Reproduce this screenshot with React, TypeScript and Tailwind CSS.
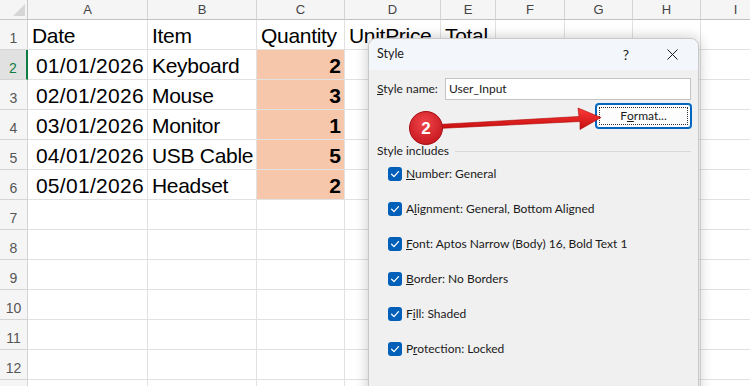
import React from 'react';

const COLS = ['A', 'B', 'C', 'D', 'E', 'F', 'G', 'H', 'I'];
const ROWS = [1, 2, 3, 4, 5, 6, 7, 8, 9, 10, 11, 12, 13];

const data: Record<number, string[]> = {
    1: ['Date', 'Item', 'Quantity', 'UnitPrice', 'Total'],
    2: ['01/01/2026', 'Keyboard', '2'],
    3: ['02/01/2026', 'Mouse', '3'],
    4: ['03/01/2026', 'Monitor', '1'],
    5: ['04/01/2026', 'USB Cable', '5'],
    6: ['05/01/2026', 'Headset', '2'],
};

const includes: [string, string, string][] = [
    ['', 'N', 'umber: General'],
    ['A', 'l', 'ignment: General, Bottom Aligned'],
    ['', 'F', 'ont: Aptos Narrow (Body) 16, Bold Text 1'],
    ['', 'B', 'order: No Borders'],
    ['F', 'i', 'll: Shaded'],
    ['P', 'r', 'otection: Locked'],
];

function Cell({row, col}: { row: number; col: number }) {
    const values = data[row];
    const value = values ? values[col] : undefined;
    const isQty = col === 2 && row >= 2 && row <= 6;
    const isDate = col === 0 && row >= 2 && row <= 6;

    let cls = 'border-r border-b border-[#e1e1e1] flex items-end leading-none whitespace-nowrap text-[21px] text-black pb-[3px] ';
    if (isQty) cls += 'bg-[#f7c7ac] justify-end pr-[3px] font-bold';
    else if (isDate) cls += 'justify-end pr-[3px] tracking-[0.3px]';
    else cls += 'pl-[4px] tracking-[-0.3px]';

    return <div className={cls}>{value}</div>;
}

function Checkbox() {
    return (
        <div className="w-[14px] h-[14px] rounded-[3px] bg-[#005fb8] flex items-center justify-center shrink-0">
            <svg width="14" height="14" viewBox="0 0 14 14">
                <polyline points="3.6,7.3 6,9.6 10.5,4.6" fill="none" stroke="white" strokeWidth="1.3"
                          strokeLinecap="round" strokeLinejoin="round"/>
            </svg>
        </div>
    );
}

export default function App() {
    return (
        <div className="relative w-[750px] h-[386px] overflow-hidden bg-white font-['Liberation_Sans',Arial,sans-serif]">

            {/* Sheet grid */}
            <div
                className="grid grid-cols-[28px_120px_109px_88px_96px_55px_69px_68px_68px_70px] grid-rows-[20px_repeat(13,30px)]">
                {/* corner */}
                <div className="bg-[#f5f5f5] border-r border-b border-[#c8c8c8] relative">
                    <div
                        className="absolute right-[2px] bottom-[3px] w-0 h-0 border-l-[12px] border-l-transparent border-b-[12px] border-b-[#d6d6d6]"></div>
                </div>
                {COLS.map((c) => (
                    <div key={c}
                         className="bg-[#f5f5f5] border-r border-b border-[#d4d4d4] border-b-[#c2c2c2] flex items-center justify-center text-[13px] text-[#444]">
                        {c}
                    </div>
                ))}

                {ROWS.map((r) => (
                    <React.Fragment key={r}>
                        <div
                            className={
                                r === 2
                                    ? 'bg-[#e1e1e1] border-r-2 border-r-[#107c41] border-b border-b-[#d4d4d4] flex items-end justify-center pb-[4px] text-[14px] leading-none text-[#107c41]'
                                    : 'bg-[#f5f5f5] border-r border-b border-[#d4d4d4] flex items-end justify-center pb-[4px] text-[14px] leading-none text-[#555]'
                            }>
                            {r}
                        </div>
                        {COLS.map((c, i) => (
                            <Cell key={c} row={r} col={i}/>
                        ))}
                    </React.Fragment>
                ))}
            </div>

            {/* Style dialog */}
            <div
                className="absolute left-[368px] top-[38px] w-[331px] h-[380px] bg-[#f0f0f0] rounded-t-[8px] border border-[#c9c9c9] shadow-[0_0_14px_rgba(0,0,0,0.22)] flex flex-col font-['Lato',sans-serif] text-[12px] text-[#1a1a1a]">
                <div className="h-[31px] bg-[#f3f6fa] rounded-t-[8px] flex items-center pl-[8px] pr-[20px] shrink-0">
                    <span className="text-[12.5px]">Style</span>
                    <span className="ml-auto text-[14px] mr-[38px]">?</span>
                    <svg width="11" height="11" viewBox="0 0 11 11">
                        <path d="M0.5 0.5 L10.5 10.5 M10.5 0.5 L0.5 10.5" stroke="#1a1a1a" strokeWidth="1"/>
                    </svg>
                </div>

                <div className="flex flex-col pl-[8px] pr-[7px] pt-[8px]">
                    <div className="flex items-center h-[22px]">
                        <span className="w-[68px]"><span className="underline">S</span>tyle name:</span>
                        <div
                            className="flex-1 h-[22px] bg-white border border-[#c4c4c4] flex items-center pl-[3px]">User_Input
                        </div>
                    </div>

                    <div className="flex justify-end mt-[4px]">
                        <div
                            className="w-[95px] h-[24px] rounded-[3px] border border-[#0067c0] bg-[#fdfdfd] p-[2px] shadow-[0_0_0_1px_#0067c0]">
                            <div
                                className="w-full h-full border border-dotted border-[#333] flex items-center justify-center">
                                F<span className="underline">o</span>rmat...
                            </div>
                        </div>
                    </div>

                    <div className="flex items-center mt-[14px]">
                        <span>Style includes</span>
                        <div className="flex-1 h-px bg-[#d9d9d9] ml-[6px]"></div>
                    </div>

                    <div className="flex flex-col gap-[21px] pl-[11px] mt-[7px]">
                        {includes.map(([a, u, b]) => (
                            <div key={u + b} className="flex items-center gap-[4px] h-[14px]">
                                <Checkbox/>
                                <span>{a}<span className="underline">{u}</span>{b}</span>
                            </div>
                        ))}
                    </div>
                </div>
            </div>

            {/* Annotation arrow */}
            <svg className="absolute left-0 top-0 pointer-events-none" width="750" height="386">
                <defs>
                    <linearGradient id="arrowFill" x1="0" y1="0" x2="0" y2="1">
                        <stop offset="0" stopColor="#ff3b3b"/>
                        <stop offset="1" stopColor="#c40d0d"/>
                    </linearGradient>
                    <radialGradient id="badgeFill" cx="0.45" cy="0.35" r="0.7">
                        <stop offset="0" stopColor="#f0454a"/>
                        <stop offset="1" stopColor="#c4161c"/>
                    </radialGradient>
                </defs>
                <path d="M438 124.5 L579 116.5 L578 108 L601 117.5 L580 129.5 L580 121.5 L438 128.5 Z"
                      fill="url(#arrowFill)" stroke="#b00000" strokeWidth="0.6"/>
                <circle cx="426" cy="128" r="16.5" fill="url(#badgeFill)" stroke="#a50f14" strokeWidth="1"/>
                <text x="426" y="134" textAnchor="middle" fontSize="17" fontWeight="bold" fill="white"
                      fontFamily="Liberation Sans, Arial, sans-serif">2
                </text>
            </svg>
        </div>
    );
}
